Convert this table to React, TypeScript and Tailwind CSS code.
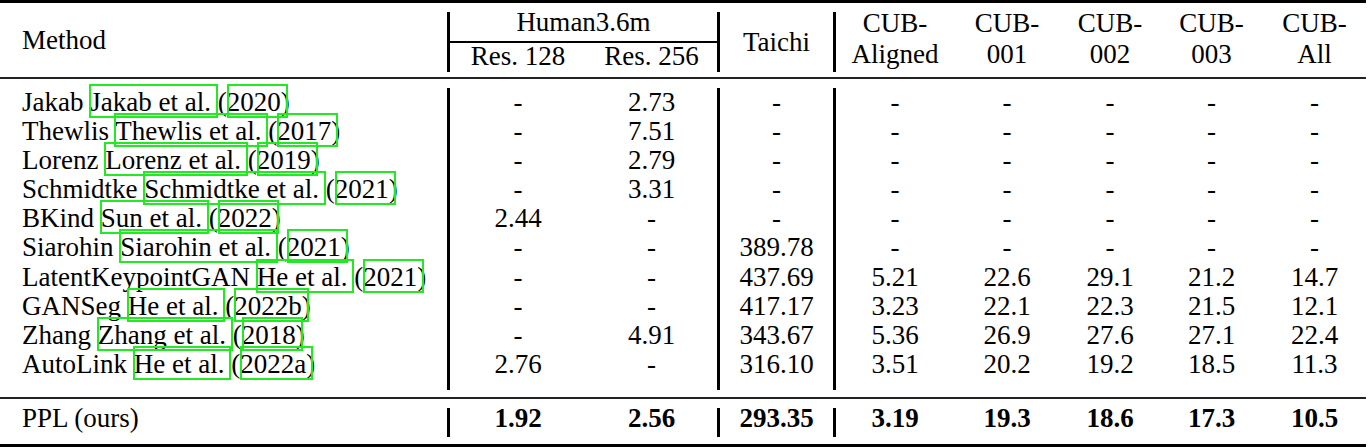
import { Fragment } from "react";

interface Row {
  name: string;
  cite: string;
  year: string;
  v: string[];
}

const rows: Row[] = [
  { name: "Jakab", cite: "Jakab et al.", year: "2020", v: ["-", "2.73", "-", "-", "-", "-", "-", "-"] },
  { name: "Thewlis", cite: "Thewlis et al.", year: "2017", v: ["-", "7.51", "-", "-", "-", "-", "-", "-"] },
  { name: "Lorenz", cite: "Lorenz et al.", year: "2019", v: ["-", "2.79", "-", "-", "-", "-", "-", "-"] },
  { name: "Schmidtke", cite: "Schmidtke et al.", year: "2021", v: ["-", "3.31", "-", "-", "-", "-", "-", "-"] },
  { name: "BKind", cite: "Sun et al.", year: "2022", v: ["2.44", "-", "-", "-", "-", "-", "-", "-"] },
  { name: "Siarohin", cite: "Siarohin et al.", year: "2021", v: ["-", "-", "389.78", "-", "-", "-", "-", "-"] },
  { name: "LatentKeypointGAN", cite: "He et al.", year: "2021", v: ["-", "-", "437.69", "5.21", "22.6", "29.1", "21.2", "14.7"] },
  { name: "GANSeg", cite: "He et al.", year: "2022b", v: ["-", "-", "417.17", "3.23", "22.1", "22.3", "21.5", "12.1"] },
  { name: "Zhang", cite: "Zhang et al.", year: "2018", v: ["-", "4.91", "343.67", "5.36", "26.9", "27.6", "27.1", "22.4"] },
  { name: "AutoLink", cite: "He et al.", year: "2022a", v: ["2.76", "-", "316.10", "3.51", "20.2", "19.2", "18.5", "11.3"] },
];

const ours = ["1.92", "2.56", "293.35", "3.19", "19.3", "18.6", "17.3", "10.5"];

// widths of the 8 number columns (res128, res256, taichi, cub x5)
const colW = ["w-[136px]", "w-[131px]", "w-[113px]", "w-[118px]", "w-[106px]", "w-[100px]", "w-[103px]", "w-[103px]"];

const cubHeads = [
  ["CUB-", "Aligned"],
  ["CUB-", "001"],
  ["CUB-", "002"],
  ["CUB-", "003"],
  ["CUB-", "All"],
];

const Bar = ({ className = "" }: { className?: string }) => (
  <div className={`w-[3px] shrink-0 bg-black ${className}`} />
);

// green link box like hyperref draws
const Cite = ({ children, year }: { children: string; year?: boolean }) => (
  <span className="relative">
    {children}
    <span
      className={
        year
          ? "absolute -top-[3px] -bottom-[1px] left-0 -right-[7px] border-2 border-[#22ea22]"
          : "absolute -top-[3px] -bottom-[1px] -left-[1px] right-0 border-2 border-[#22ea22]"
      }
    />
  </span>
);

export default function App() {
  return (
    <div className="w-[1366px] bg-white text-black [font-family:'Liberation_Serif',serif] text-[27px]">
      <div className="h-[3px] bg-black" />

      {/* header */}
      <div className="flex h-[74px]">
        <div className="w-[447px] pl-[22px] flex items-center">Method</div>
        <Bar className="mt-[9px] mb-[5px]" />
        <div className="w-[267px] flex flex-col items-center pt-[6px]">
          <div className="leading-[26px]">Human3.6m</div>
          <div className="mt-[6px] h-[1.5px] w-full bg-black" />
          <div className="flex w-full leading-[26px]">
            <div className="w-[136px] text-center">Res. 128</div>
            <div className="w-[131px] text-center">Res. 256</div>
          </div>
        </div>
        <Bar className="mt-[9px] mb-[5px]" />
        <div className="w-[113px] flex items-center justify-center pt-[4px]">Taichi</div>
        <Bar className="mt-[9px] mb-[5px]" />
        {cubHeads.map((h, i) => (
          <div key={i} className={`${colW[i + 3]} flex flex-col items-center pt-[5px] leading-[31px]`}>
            <div>{h[0]}</div>
            <div>{h[1]}</div>
          </div>
        ))}
      </div>

      <div className="h-[2px] bg-[#222]" />

      {/* body */}
      <div className="flex pt-[9px] pb-[7px]">
        <div className="w-[447px] flex flex-col pl-[22px] pb-[11px]">
          {rows.map((r, i) => (
            <div key={i} className="h-[29.1px] leading-[29.1px] whitespace-nowrap">
              {r.name} <Cite>{r.cite + " "}</Cite>(<Cite year>{r.year}</Cite>)
            </div>
          ))}
        </div>
        <Bar />
        {colW.map((w, c) => (
          <Fragment key={c}>
            {(c === 2 || c === 3) && <Bar />}
            <div className={`${w} flex flex-col pb-[11px] text-center`}>
              {rows.map((r, i) => (
                <div key={i} className="h-[29.1px] leading-[29.1px]">
                  {r.v[c]}
                </div>
              ))}
            </div>
          </Fragment>
        ))}
      </div>

      <div className="h-[2px] bg-[#222]" />

      {/* ours */}
      <div className="flex pt-[9px] pb-[7px]">
        <div className="w-[447px] pl-[22px] h-[29px] leading-[20px]">PPL (ours)</div>
        <Bar />
        {colW.map((w, c) => (
          <Fragment key={c}>
            {(c === 2 || c === 3) && <Bar />}
            <div className={`${w} h-[29px] leading-[20px] text-center font-bold`}>{ours[c]}</div>
          </Fragment>
        ))}
      </div>

      <div className="h-[3px] bg-black" />
    </div>
  );
}
